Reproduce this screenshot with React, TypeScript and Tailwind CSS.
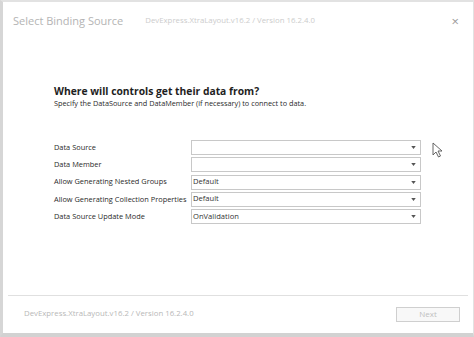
const rows = [
  { label: "Data Source", value: "" },
  { label: "Data Member", value: "" },
  { label: "Allow Generating Nested Groups", value: "Default" },
  { label: "Allow Generating Collection Properties", value: "Default" },
  { label: "Data Source Update Mode", value: "OnValidation" },
]

function Combo({ value }: { value: string }) {
  return (
    <div className="flex h-[15px] w-[230px] items-center border border-[#c8c8c8] bg-white pl-[1px] pr-[4px]">
      <span className="flex-1 text-[7.6px] leading-none text-[#333]">{value}</span>
      <svg width="5" height="3" viewBox="0 0 6 4">
        <path d="M0 0 H6 L3 4 Z" fill="#555" />
      </svg>
    </div>
  )
}

export default function App() {
  return (
    <div
      className="h-[337px] w-[474px] overflow-hidden bg-white"
      style={{ fontFamily: '"Open Sans", "Noto Sans", sans-serif' }}
    >
      <div className="flex h-full flex-col border-t-2 border-b-4 border-l-[3px] border-r border-t-[#e2e2e2] border-b-[#d2d2d2] border-l-[#d6d6d6] border-r-[#e2e2e2] bg-white">
        {/* title bar */}
        <div className="flex h-[38px] items-center pl-[10px] pr-[14px]">
          <span className="text-[11px] text-[#b4b4b4]">Select Binding Source</span>
          <span className="ml-[22px] text-[7.8px] text-[#cccccc]">DevExpress.XtraLayout.v16.2 / Version 16.2.4.0</span>
          <span className="ml-auto text-[13px] leading-none text-[#9a9a9a]">×</span>
        </div>

        {/* heading */}
        <div className="mt-[45px] pl-[51px]">
          <div className="text-[10.3px] font-bold leading-[13px] text-[#1e1e1e]">Where will controls get their data from?</div>
          <div className="text-[7.3px] leading-[11px] text-[#2a2a2a]">
            Specify the DataSource and DataMember (if necessary) to connect to data.
          </div>
        </div>

        {/* form */}
        <div className="relative mt-[31px] flex flex-col gap-[2.25px] pl-[51px]">
          {rows.map((r) => (
            <div key={r.label} className="flex items-center">
              <span className="w-[137px] whitespace-nowrap text-[7.4px] text-[#2a2a2a]">{r.label}</span>
              <Combo value={r.value} />
            </div>
          ))}
          <svg className="absolute left-[429px] top-[2px]" width="12" height="16" viewBox="0 0 12 16">
            <path d="M1 1 L1 13 L4 10 L6.5 15 L8.5 14 L6 9 L10 9 Z" fill="white" stroke="#555" strokeWidth="0.9" />
          </svg>
        </div>

        <div className="flex-1" />

        {/* footer */}
        <div className="mx-[5px] h-[1px] bg-[#e0e0e0]" />
        <div className="mb-[1px] flex h-[36px] items-center pl-[21px] pr-[13px]">
          <span className="text-[7.8px] text-[#b8b8b8]">DevExpress.XtraLayout.v16.2 / Version 16.2.4.0</span>
          <div className="ml-auto flex h-[15px] w-[64px] items-center justify-center border border-[#cfcfcf] bg-[#f8f8f8] text-[8px] text-[#c0c0c0]">
            Next
          </div>
        </div>
      </div>
    </div>
  )
}
